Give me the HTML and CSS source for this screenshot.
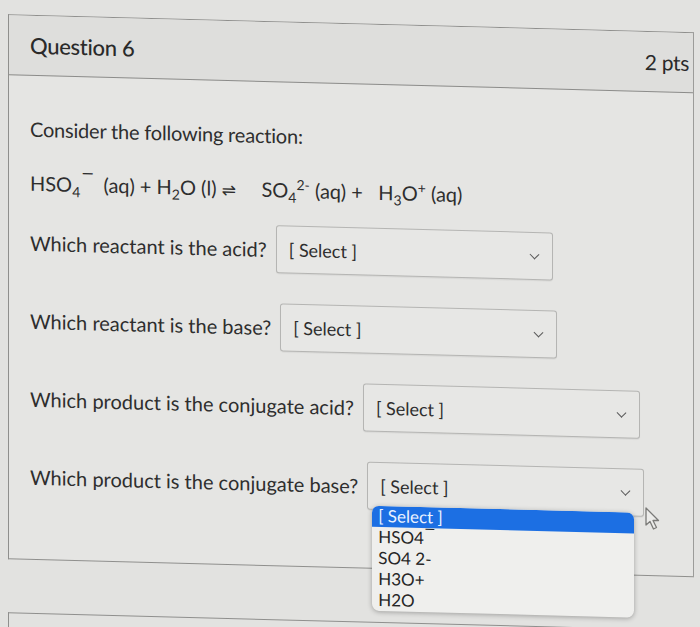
FILE: index.html
```html
<!DOCTYPE html>
<html lang="en">
  <head>
    <meta charset="UTF-8" />
    <meta name="viewport" content="width=device-width, initial-scale=1.0" />
    <title>Question 6</title>
    <link rel="stylesheet" href="styles.css">
  </head>
  <body>
    <div class="page">
      <div class="question">
        <div class="question-header">
          <h2 class="question-title">Question 6</h2>
          <span class="points">2 pts</span>
        </div>
        <div class="question-body">
          <p class="text">Consider the following reaction:</p>
          <p class="text equation">
            HSO<sub>4</sub><sup class="bar">‾</sup>&nbsp; (aq) + H<sub>2</sub>O (l) <span class="arrow">⇌</span>&nbsp;&nbsp;&nbsp;&nbsp; SO<sub>4</sub><sup>2-</sup> (aq) + &nbsp;&nbsp;H<sub>3</sub>O<sup>+</sup> (aq)
          </p>

          <div class="row">
            <span class="label">Which reactant is the acid?</span>
            <div class="select"><span>[ Select ]</span><span class="chevron"></span></div>
          </div>
          <div class="row">
            <span class="label">Which reactant is the base?</span>
            <div class="select"><span>[ Select ]</span><span class="chevron"></span></div>
          </div>
          <div class="row">
            <span class="label">Which product is the conjugate acid?</span>
            <div class="select"><span>[ Select ]</span><span class="chevron"></span></div>
          </div>
          <div class="row">
            <span class="label">Which product is the conjugate base?</span>
            <div class="select open">
              <span>[ Select ]</span><span class="chevron"></span>
              <ul class="options">
                <li class="selected">[ Select ]</li>
                <li>HSO4<span class="macron">‾</span></li>
                <li>SO4 2-</li>
                <li>H3O+</li>
                <li>H2O</li>
              </ul>
            </div>
          </div>
        </div>
      </div>

      <div class="question next"></div>
    </div>

    <!-- mouse pointer over the page -->
    <svg class="cursor" width="20" height="26" viewBox="0 0 20 26">
      <path d="M3 2 L3 19 L7 15.5 L10.5 23 L13.5 21.5 L10 14.5 L15.5 14.5 Z" fill="#ececea" stroke="#7a7a78" stroke-width="1.3" stroke-linejoin="round" />
    </svg>
  </body>
</html>
```

FILE: styles.css
```css
body {
  margin: 0;
  background-color: #e2e2e0;
  font-family: Lato, "Open Sans", sans-serif;
  color: #2e2e2e;
  overflow: hidden;
}
/* the photo is taken at a slight angle */
.page {
  padding: 14px 0 0 8px;
  transform: skewY(1.5deg);
  transform-origin: 0 0;
}
.question {
  width: 684px;
  border: 1px solid #8f8f8d;
  border-right-color: #9c9c9a;
  background-color: #e5e5e3;
}
.question-header {
  display: flex;
  justify-content: space-between;
  align-items: center;
  height: 59px;
  padding: 0 4px 0 21px;
  background-color: #dededc;
  border-bottom: 1px solid #8c8c8a;
}
.question-title {
  margin: 0;
  font-size: 22px;
  font-weight: 500;
  letter-spacing: -0.3px;
  color: #2a2a2a;
}
.points {
  font-size: 21px;
  letter-spacing: -0.3px;
  color: #2a2a2a;
}
.question-body {
  padding: 39px 0 58px 21px;
}
.text {
  margin: 0 0 26px;
  font-size: 20px;
  line-height: 28px;
  letter-spacing: -0.2px;
}
.equation {
  margin-bottom: 20px;
  letter-spacing: 0;
}
sub,
sup {
  font-size: 14px;
  line-height: 0;
}
sup.bar {
  font-size: 17px;
  margin-left: 2px;
  vertical-align: 5px;
}
.arrow {
  font-family: "DejaVu Sans", sans-serif;
  font-size: 17px;
}
.row {
  display: flex;
  align-items: center;
  gap: 9px;
  margin-bottom: 30px;
}
.row:last-child {
  margin-bottom: 0;
}
.label {
  font-size: 20px;
}
.select {
  position: relative;
  display: flex;
  justify-content: space-between;
  align-items: center;
  width: 277px;
  height: 48px;
  padding: 0 14px 0 12px;
  box-sizing: border-box;
  background-color: #e7e7e5;
  border: 1px solid #b5b5b3;
  border-radius: 3px;
  box-shadow: 0 1px 1px rgba(0, 0, 0, 0.06);
  font-size: 18px;
}
.chevron {
  width: 6px;
  height: 6px;
  margin-top: -3px;
  border-right: 1.5px solid #5a5a5a;
  border-bottom: 1.5px solid #5a5a5a;
  transform: rotate(45deg);
}
.options {
  position: absolute;
  top: calc(100% - 3px);
  left: 4px;
  width: 262px;
  margin: 0;
  padding: 0;
  list-style: none;
  background-color: #efefed;
  border-radius: 7px;
  box-shadow: 0 1px 5px rgba(0, 0, 0, 0.3);
  overflow: hidden;
  z-index: 2;
}
.options li {
  height: 21px;
  line-height: 19px;
  padding-left: 6px;
  font-size: 17px;
  color: #262626;
}
.options li.selected {
  background-color: #1c6fe3;
  color: #eaf2ff;
}
.macron {
  margin-left: 1px;
  font-size: 15px;
  line-height: 0;
  vertical-align: 3px;
}
.question.next {
  margin-top: 53px;
  height: 20px;
  background-color: #e2e2e0;
  border-right: none;
}
.cursor {
  position: absolute;
  left: 643px;
  top: 506px;
}
```
